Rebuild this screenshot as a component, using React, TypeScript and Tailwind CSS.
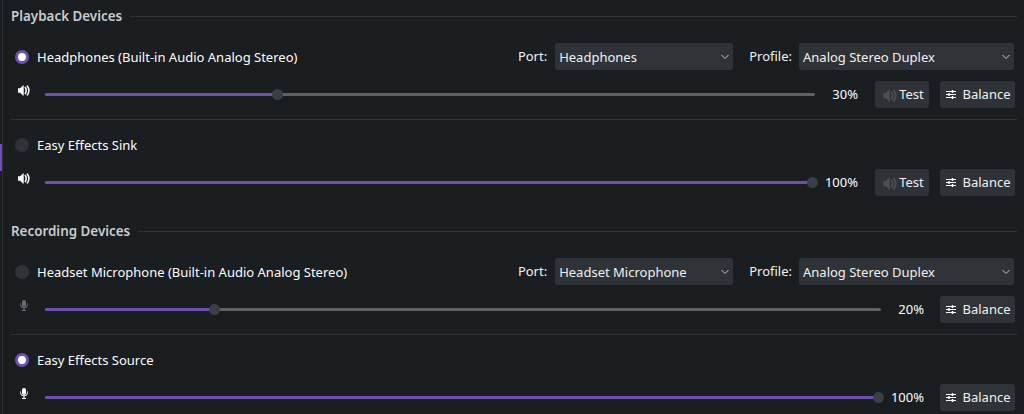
import React from "react";

const FONT = "font-['Noto_Sans',sans-serif]";

function Speaker({ dim }: { dim?: boolean }) {
  const c = dim ? "#4c5054" : "#fcfcfc";
  const s = dim ? 18 : 16;
  return (
    <svg width={s} height={s} viewBox="0 0 16 16" fill="none">
      <path d="M3 6.200h2L8.700 3v11L5 10.800H3z" fill={c} />
      <path d="M10 5c1.400 2 1.400 5 0 7" stroke={c} strokeWidth="1.500" />
      <path d="M12 3.500c2.300 3 2.300 7 0 10" stroke={c} strokeWidth="1.500" />
    </svg>
  );
}

function Mic({ dim }: { dim?: boolean }) {
  const c = dim ? "#6a6e72" : "#fcfcfc";
  return (
    <svg width="16" height="16" viewBox="0 0 16 16" fill="none">
      <rect x="7" y="3" width="4" height="7" rx="2" fill={c} />
      <path d="M5.500 6.500v1a3.500 3.500 0 0 0 7 0v-1" stroke={c} strokeWidth="1" />
      <path d="M9 11v2.500M7 13.500h4" stroke={c} strokeWidth="1.200" />
    </svg>
  );
}

function BalanceIcon() {
  return (
    <svg width="12" height="9" viewBox="0 0 12 9" fill="none" stroke="#fcfcfc" strokeWidth="1">
      <path d="M1 1.500h10M1 4.500h10M1 7.500h10" />
      <path d="M7.500 0v3M4 3v3M7.500 6v3" strokeWidth="1.500" />
    </svg>
  );
}

function Combo({ text, width }: { text: string; width: string }) {
  return (
    <div className={`${width} h-[27px] bg-[#2f3337] rounded-[3px] flex items-center justify-between pl-1 pr-[3px] text-[#eff0f1]`}>
      <span className="pt-px">{text}</span>
      <svg width="10" height="10" viewBox="0 0 10 10" fill="none" stroke="#c4c6c8" strokeWidth="1">
        <path d="M1.500 3L5 6.500 8.500 3" />
      </svg>
    </div>
  );
}

function Slider({ value }: { value: number }) {
  const pos = `calc(3px + (100% - 6px) * ${value / 100})`;
  return (
    <div className="flex-1 relative h-[3px] bg-[#5f6163] rounded-full">
      <div className="h-full bg-[#6e4fb4] rounded-full" style={{ width: pos }} />
      <div
        className="absolute top-[-4px] w-[11px] h-[11px] -ml-[5px] rounded-full bg-[#3a3f44]"
        style={{ left: pos }}
      />
    </div>
  );
}

function Btn({ children, width }: { children: React.ReactNode; width: string }) {
  return (
    <div className={`${width} h-[27px] bg-[#2f3337] rounded-[3px] flex items-center justify-center gap-[6px] text-[#eff0f1]`}>
      {children}
    </div>
  );
}

type DeviceProps = {
  name: string;
  active?: boolean;
  combos?: { port: string };
  value: number;
  test?: boolean;
  mic?: boolean;
  dim?: boolean;
};

function Device({ name, active, combos, value, test, mic, dim }: DeviceProps) {
  return (
    <div className="flex flex-col gap-[11px]">
      <div className="h-[26px] flex items-end">
        <div className="h-full w-[37px] pl-[15px] flex items-center shrink-0">
          {active ? (
            <div className="w-[14px] h-[14px] rounded-full bg-white border-[3px] border-[#6e4fb4]" />
          ) : (
            <div className="w-[14px] h-[14px] rounded-full bg-[#2f3337]" />
          )}
        </div>
        <span className="self-center flex-1 text-[#fcfcfc]">{name}</span>
        {combos && (
          <div className="flex items-center pr-[10px]">
            <span className="mr-[8px] text-[#eff0f1]">Port:</span>
            <Combo text={combos.port} width="w-[178px]" />
            <span className="ml-[16px] mr-[7px] text-[#eff0f1]">Profile:</span>
            <Combo text="Analog Stereo Duplex" width="w-[215px]" />
          </div>
        )}
      </div>
      <div className="h-[27px] flex items-center pr-[9px]">
        <div className="w-[45px] pl-[15px] shrink-0 flex items-center h-full pb-[9px]">
          {mic ? <Mic dim={dim} /> : <Speaker />}
        </div>
        <Slider value={value} />
        <span className={`w-[43px] text-right text-[#fcfcfc] ${test ? "mr-[17px]" : "mr-[16px]"}`}>{value}%</span>
        {test && (
          <div className="mr-[11px]">
            <Btn width="w-[54px]">
              <Speaker dim />
              <span className="-ml-[5px]">Test</span>
            </Btn>
          </div>
        )}
        <Btn width="w-[75px]">
          <BalanceIcon />
          <span>Balance</span>
        </Btn>
      </div>
    </div>
  );
}

function Heading({ title }: { title: string }) {
  return (
    <div className="h-[28px] flex items-center pl-[11px] pr-[7px] gap-[8px]">
      <span className="font-semibold text-[13.4px] text-[#c9cbcd] pt-[2px]">{title}</span>
      <div className="flex-1 h-px bg-[#303336]" />
    </div>
  );
}

function Sep() {
  return <div className="h-px bg-[#303336] ml-[11px] mr-[7px] mt-[11px] mb-[12px]" />;
}

export default function App() {
  return (
    <div className={`${FONT} w-[1024px] h-[414px] overflow-hidden bg-[#1b1e20] text-[13px] leading-none flex`}>
      <div className="w-[3px] shrink-0 border-r border-[#2c2f32] flex flex-col pt-[144px]">
        <div className="w-[2px] h-[27px] bg-[#6e4fb4]" />
      </div>
      <div className="flex-1 -ml-[3px] flex flex-col min-w-0">
        <div className="pt-[2px]">
          <Heading title="Playback Devices" />
        </div>
        <div className="pt-[14px]">
          <Device name="Headphones (Built-in Audio Analog Stereo)" active combos={{ port: "Headphones" }} value={30} test />
          <Sep />
          <Device name="Easy Effects Sink" value={100} test />
        </div>
        <div className="pt-[21px]">
          <Heading title="Recording Devices" />
        </div>
        <div className="pt-[14px]">
          <Device name="Headset Microphone (Built-in Audio Analog Stereo)" combos={{ port: "Headset Microphone" }} value={20} mic dim />
          <Sep />
          <Device name="Easy Effects Source" active value={100} mic />
        </div>
      </div>
    </div>
  );
}
